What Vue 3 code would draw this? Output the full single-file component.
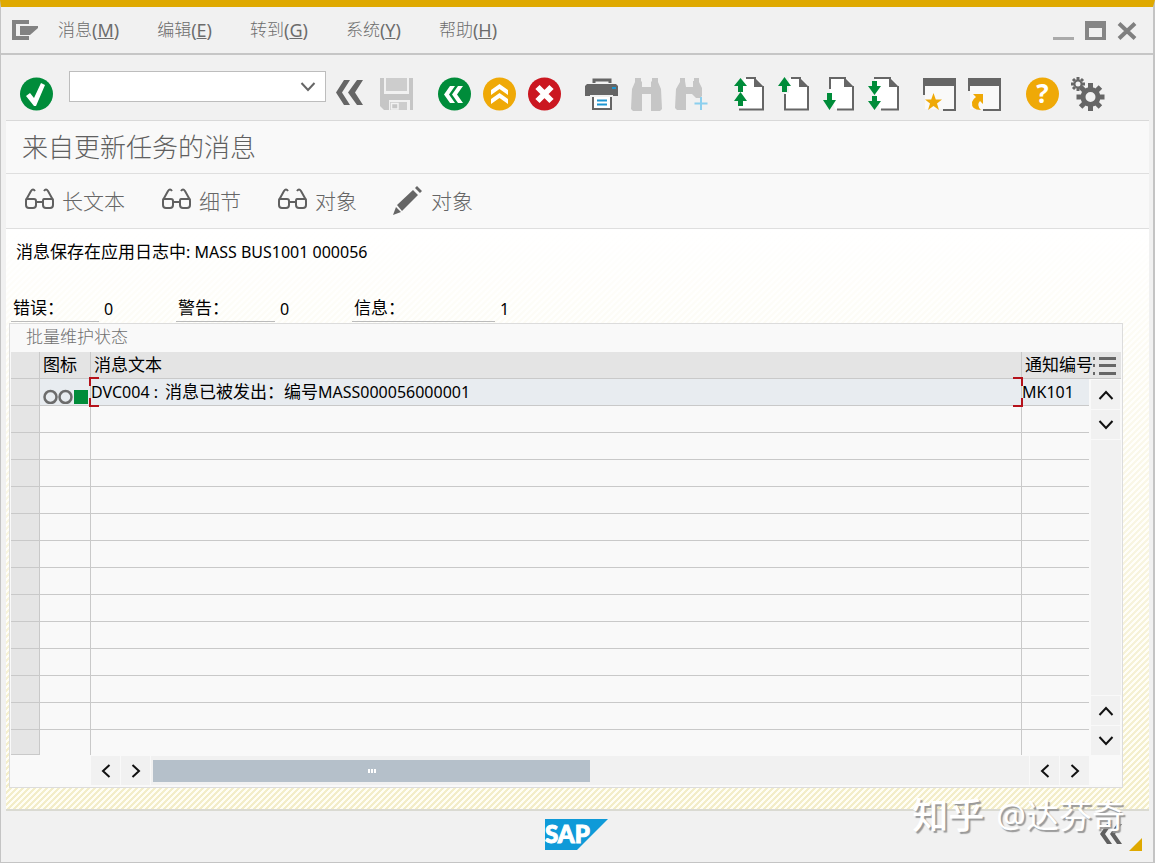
<script setup>
import { ref } from 'vue'

const command = ref('')

const menus = [
  { label: '消息', key: 'M' },
  { label: '编辑', key: 'E' },
  { label: '转到', key: 'G' },
  { label: '系统', key: 'Y' },
  { label: '帮助', key: 'H' },
]

const actions = [
  { icon: 'glasses', label: '长文本' },
  { icon: 'glasses', label: '细节' },
  { icon: 'glasses', label: '对象' },
  { icon: 'pencil', label: '对象' },
]

const counters = [
  { id: 'errors', label: '错误：', value: 0, size: 'first' },
  { id: 'warnings', label: '警告：', value: 0, size: 'second' },
  { id: 'infos', label: '信息：', value: 1, size: 'third' },
]

const emptyRows = 13
</script>

<template>
  <div class="window">
    <header class="menubar">
      <button class="plain sysmenu" aria-label="系统菜单">
        <svg width="27" height="20" viewBox="0 0 27 20">
          <path d="M17 2H2V18H17" fill="none" stroke="#828282" stroke-width="4" />
          <path d="M8 6H26V8L18 15H8Z" fill="#828282" />
        </svg>
      </button>
      <nav class="menus">
        <button v-for="m in menus" :key="m.key" class="plain menu">
          <span>{{ m.label }}</span><span class="latin">(<u>{{ m.key }}</u>)</span>
        </button>
      </nav>
      <div class="controls">
        <button class="plain" aria-label="最小化">
          <svg width="22" height="20" viewBox="0 0 22 20"><path d="M0 18.500H21" stroke="#aaa" stroke-width="3" /></svg>
        </button>
        <button class="plain" aria-label="最大化">
          <svg width="22" height="20" viewBox="0 0 22 20"><path d="M0 1H21V20H0ZM4 8V17H17V8Z" fill="#868686" fill-rule="evenodd" /></svg>
        </button>
        <button class="plain" aria-label="关闭">
          <svg width="20" height="20" viewBox="0 0 20 20"><path d="M2 3.500L18 18.500M18 3.500L2 18.500" stroke="#808080" stroke-width="4" /></svg>
        </button>
      </div>
    </header>

    <div class="toolbar">
      <button class="plain tool" aria-label="确认">
        <svg width="35" height="35" viewBox="0 0 35 35">
          <circle cx="17.500" cy="18" r="16.500" fill="#008c3a" />
          <path d="M7 20L11 17L15 22L22 7L26 9L17 30H15Z" fill="#fff" />
        </svg>
      </button>
      <div class="combo">
        <input v-model="command" type="text" aria-label="命令" />
        <button class="plain" aria-label="命令历史">
          <svg width="16" height="10" viewBox="0 0 16 10"><path d="M1.500 1L8 8L14.500 1" fill="none" stroke="#666" stroke-width="2" /></svg>
        </button>
      </div>
      <div class="group leading">
        <button class="plain tool" aria-label="收起">
          <svg width="35" height="35" viewBox="0 0 35 35">
            <path d="M16 4H10L2 16.500L10 29H16L8 16.500ZM29 4H23L14 16.500L23 29H29L21 16.500Z" fill="#666" />
          </svg>
        </button>
        <button class="plain tool" aria-label="保存" disabled>
          <svg width="35" height="35" viewBox="0 0 35 35">
            <path d="M1 2H5V18H30V2H34V34H31V24H10V34H5L1 30Z" fill="#c6c6c6" />
            <path d="M7 2H28V15H7ZM11 26H28V34H11Z" fill="#cdcdcd" />
            <path d="M12.500 27.500H19V33H12.500Z" fill="#c6c6c6" stroke="#f2f2f2" stroke-width="1.500" />
          </svg>
        </button>
      </div>
      <div class="group wide">
        <button class="plain tool" aria-label="返回">
          <svg width="35" height="35" viewBox="0 0 35 35">
            <circle cx="17.500" cy="18" r="16.500" fill="#008c3a" />
            <path d="M18 10H13L7 18.500L13 27H18L12 18.500ZM26 10H21L15 18.500L21 27H26L20 18.500Z" fill="#fff" />
          </svg>
        </button>
        <button class="plain tool" aria-label="退出">
          <svg width="35" height="35" viewBox="0 0 35 35">
            <circle cx="17.500" cy="18" r="16.500" fill="#efa907" />
            <path d="M17.500 8L26 14V19L17.500 13L9 19V14ZM17.500 17L26 23V28L17.500 22L9 28V23Z" fill="#fff" />
          </svg>
        </button>
        <button class="plain tool" aria-label="取消">
          <svg width="35" height="35" viewBox="0 0 35 35">
            <circle cx="17.500" cy="18" r="16.500" fill="#cb1720" />
            <path d="M10.500 11L24.500 25M24.500 11L10.500 25" stroke="#fff" stroke-width="6" />
          </svg>
        </button>
      </div>
      <div class="group">
        <button class="plain tool" aria-label="打印">
          <svg width="35" height="35" viewBox="0 0 35 35">
            <path d="M10 7V4H26V7" fill="none" stroke="#666" stroke-width="3" />
            <path d="M3 8H32L34 10V20H29V17H6V20H1V10Z" fill="#666" />
            <path d="M9 21V33H27V21" fill="#fff" stroke="#666" stroke-width="2" />
            <path d="M6 17H30" stroke="#666" stroke-width="4" />
            <path d="M13 24.500H23M13 28.500H23" stroke="#1c96d2" stroke-width="2" />
            <path d="M28 12H32" stroke="#1c96d2" stroke-width="2" />
          </svg>
        </button>
        <button class="plain tool" aria-label="查找" disabled>
          <svg width="35" height="35" viewBox="0 0 35 35">
            <path d="M6 2H12V5L13 6V11H22V6L23 5V2H29V6L32 13L33 33L31 35H22V18H13V35H4L2 33L3 13L6 6Z" fill="#c6c6c6" />
          </svg>
        </button>
        <button class="plain tool" aria-label="继续查找" disabled>
          <svg width="35" height="35" viewBox="0 0 35 35">
            <path d="M6 2H11V5L12 11H19V5H20V2H25V6L28 12V20L26 22H22L18 18H12V34H3L1 32L2 13L6 6Z" fill="#c6c6c6" />
            <path d="M27 21V34M20.500 27.500H33.500" stroke="#8ccfee" stroke-width="2" />
          </svg>
        </button>
      </div>
      <div class="group wide">
        <button class="plain tool" aria-label="第一页">
          <svg width="35" height="35" viewBox="0 0 35 35">
            <path d="M12 2H24L31 9V33H7V24Z" fill="#fff" />
            <path d="M14 2H24M31 10V33.500H7" fill="none" stroke="#666" stroke-width="2" />
            <path d="M22 1L32 11H22Z" fill="#666" />
            <path d="M8.500 2L15 10H11V16H6V10H2ZM8.500 16L15 25H11V30H6V25H2Z" fill="#008c3a" />
          </svg>
        </button>
        <button class="plain tool" aria-label="上一页">
          <svg width="35" height="35" viewBox="0 0 35 35">
            <path d="M12 2H24L31 9V33H8V17H12Z" fill="#fff" />
            <path d="M14 2H24M31 10V33.500H8V18" fill="none" stroke="#666" stroke-width="2" />
            <path d="M22 1L32 11H22Z" fill="#666" />
            <path d="M7.500 1L14 10H10V16H5V10H1Z" fill="#008c3a" />
          </svg>
        </button>
        <button class="plain tool" aria-label="下一页">
          <svg width="35" height="35" viewBox="0 0 35 35">
            <path d="M8 2H24L31 9V33H13L8 16Z" fill="#fff" />
            <path d="M8 13V2H24M31 10V33.500H15" fill="none" stroke="#666" stroke-width="2" />
            <path d="M22 1L32 11H22Z" fill="#666" />
            <path d="M5 17H10V24H14L7.500 34L1 24H5Z" fill="#008c3a" />
          </svg>
        </button>
        <button class="plain tool" aria-label="最后一页">
          <svg width="35" height="35" viewBox="0 0 35 35">
            <path d="M8 2H24L31 9V33H13L8 16Z" fill="#fff" />
            <path d="M7 2H24M31 10V33.500H14" fill="none" stroke="#666" stroke-width="2" />
            <path d="M22 1L32 11H22Z" fill="#666" />
            <path d="M5 5H10V10H14L7.500 19L1 10H5ZM5 20H10V25H14L7.500 34L1 25H5Z" fill="#008c3a" />
          </svg>
        </button>
      </div>
      <div class="group tight">
        <button class="plain tool" aria-label="新建会话">
          <svg width="35" height="35" viewBox="0 0 35 35">
            <path d="M3 8H32V33H3Z" fill="#f9f9f9" />
            <path d="M1 2H34V35H21V33H32V10H3V19H1Z" fill="#666" />
            <path d="M11.500 17L13.800 23.500H20L15 27.500L17 34L11.500 30L6 34L8 27.500L3 23.500H9.200Z" fill="#efa907" />
          </svg>
        </button>
        <button class="plain tool" aria-label="创建快捷方式">
          <svg width="35" height="35" viewBox="0 0 35 35">
            <path d="M3 8H32V33H3Z" fill="#f9f9f9" />
            <path d="M1 2H34V35H16V33H32V10H3V15H1Z" fill="#666" />
            <path d="M6 18H16V28L13 25Q9 29 14 34Q4 34 5 26Q6 23 9 21Z" fill="#efa907" />
          </svg>
        </button>
      </div>
      <div class="group wide">
        <button class="plain tool" aria-label="帮助">
          <svg width="35" height="35" viewBox="0 0 35 35">
            <circle cx="17.500" cy="18" r="16.500" fill="#efa907" />
            <text x="17.500" y="27" class="question">?</text>
          </svg>
        </button>
        <button class="plain tool" aria-label="自定义布局">
          <svg width="35" height="35" viewBox="0 0 35 35">
            <g fill="none" stroke="#666">
              <circle cx="20.500" cy="21" r="7.500" stroke-width="5" />
              <path d="M20.500 7V13M20.500 29V35M6.500 21H12.500M28.500 21H34.500M10.600 11.100L14.800 15.300M26.200 26.700L30.400 30.900M30.400 11.100L26.200 15.300M14.800 26.700L10.600 30.900" stroke-width="5" />
              <circle cx="8" cy="8" r="3.500" stroke-width="2" />
              <path d="M8 1V4M8 12V15M1 8H4M12 8H15M3 3L5 5M11 11L13 13M13 3L11 5M5 11L3 13" stroke-width="3" />
            </g>
          </svg>
        </button>
      </div>
    </div>

    <h1 class="title">来自更新任务的消息</h1>

    <div class="actions">
      <button v-for="(a, i) in actions" :key="i" class="plain action">
        <svg v-if="a.icon === 'glasses'" width="30" height="30" viewBox="0 0 30 30">
          <g fill="none" stroke="#606060" stroke-width="2">
            <path d="M3 13H10Q12 13 12 15V19Q12 22 9 22H5Q2 22 2 19V15Q2 13 3 13ZM20 13H28Q29 13 29 15V19Q29 22 26 22H22Q19 22 19 19V15Q19 13 20 13ZM12 16H19" />
            <path d="M2 14L7 5Q9 2 11 5M29 14L24 5Q22 2 20 5" />
          </g>
        </svg>
        <svg v-else width="30" height="30" viewBox="0 0 30 30">
          <path d="M3 21L8 26L0 29ZM4 19L20 4L25 9L9 25ZM22 2L24 0L29 5L27 7Z" fill="#666" />
        </svg>
        <span>{{ a.label }}</span>
      </button>
    </div>

    <main class="content">
      <p class="notice">消息保存在应用日志中<span class="latin">: MASS BUS1001 000056</span></p>

      <div class="counters">
        <div v-for="c in counters" :key="c.id" class="counter" :class="c.size">
          <label :for="c.id">{{ c.label }}</label>
          <output :id="c.id" class="latin">{{ c.value }}</output>
        </div>
      </div>

      <section class="panel">
        <h2>批量维护状态</h2>
        <div class="grid">
          <table>
            <colgroup>
              <col class="c-select" />
              <col class="c-icon" />
              <col />
              <col class="c-number" />
            </colgroup>
            <thead>
              <tr>
                <th></th>
                <th>图标</th>
                <th>消息文本</th>
                <th>通知编号</th>
              </tr>
            </thead>
            <tbody>
              <tr class="selected">
                <td></td>
                <td>
                  <svg class="light" width="46" height="16" viewBox="0 0 46 16">
                    <circle cx="7.500" cy="9" r="6" fill="none" stroke="#6c6c6c" stroke-width="2.500" />
                    <circle cx="22.500" cy="9" r="6" fill="none" stroke="#6c6c6c" stroke-width="2.500" />
                    <path d="M31 2H45V16H31Z" fill="#008c3a" />
                  </svg>
                </td>
                <td class="focus">
                  <span class="latin code">DVC004 :</span>消息已被发出：编号<span class="latin">MASS000056000001</span>
                  <span class="bracket open"></span>
                  <span class="bracket close"></span>
                </td>
                <td><span class="latin">MK101</span></td>
              </tr>
              <tr v-for="n in emptyRows" :key="n">
                <td></td>
                <td></td>
                <td></td>
                <td></td>
              </tr>
            </tbody>
          </table>
          <div class="side">
            <button class="plain config" aria-label="表格设置">
              <svg width="26" height="20" viewBox="0 0 26 20">
                <path d="M1 3.500H3M1 10.500H3M1 18.500H3M7 3.500H24M7 10.500H24M7 18.500H24" stroke="#666" stroke-width="3" />
              </svg>
            </button>
            <div class="vscroll">
              <button class="plain arrow" aria-label="向上">
                <svg width="16" height="10" viewBox="0 0 16 10"><path d="M1.500 9L8 2L14.500 9" /></svg>
              </button>
              <button class="plain arrow" aria-label="向下">
                <svg width="16" height="10" viewBox="0 0 16 10"><path d="M1.500 1L8 8L14.500 1" /></svg>
              </button>
              <div class="track"></div>
              <button class="plain arrow" aria-label="上一行">
                <svg width="16" height="10" viewBox="0 0 16 10"><path d="M1.500 9L8 2L14.500 9" /></svg>
              </button>
              <button class="plain arrow" aria-label="下一行">
                <svg width="16" height="10" viewBox="0 0 16 10"><path d="M1.500 1L8 8L14.500 1" /></svg>
              </button>
            </div>
          </div>
        </div>
        <div class="hscroll">
          <button class="plain arrow" aria-label="向左">
            <svg width="10" height="14" viewBox="0 0 10 14"><path d="M8.500 1L2 7L8.500 13" /></svg>
          </button>
          <button class="plain arrow" aria-label="向右">
            <svg width="10" height="14" viewBox="0 0 10 14"><path d="M1.500 1L8 7L1.500 13" /></svg>
          </button>
          <div class="track">
            <div class="thumb"><i></i><i></i><i></i></div>
          </div>
          <button class="plain arrow" aria-label="左移一列">
            <svg width="10" height="14" viewBox="0 0 10 14"><path d="M8.500 1L2 7L8.500 13" /></svg>
          </button>
          <button class="plain arrow" aria-label="右移一列">
            <svg width="10" height="14" viewBox="0 0 10 14"><path d="M1.500 1L8 7L1.500 13" /></svg>
          </button>
        </div>
      </section>
    </main>

    <footer class="status">
      <svg class="logo" width="64" height="32" viewBox="0 0 64 32" role="img" aria-label="SAP">
        <path d="M0 0H63L32 31H0Z" fill="#0f9ad8" />
        <text x="0" y="24" class="sap">SAP</text>
      </svg>
      <button class="plain expand" aria-label="展开状态栏">
        <svg width="22" height="20" viewBox="0 0 22 20">
          <path d="M12 0H7L0 10L7 20H12L5 10ZM22 0H17L10 10L17 20H22L15 10Z" fill="#606060" />
        </svg>
      </button>
      <svg class="grip" width="14" height="14" viewBox="0 0 14 14"><path d="M13 0V13H0Z" fill="#dfa900" /></svg>
      <div class="watermark"><b>知乎</b><span>@达芬奇</span></div>
    </footer>
  </div>
</template>

<style>
body {
  margin: 0;
  background: #f1f1f1;
}
</style>

<style scoped>
* {
  box-sizing: border-box;
}
.window {
  display: flex;
  flex-direction: column;
  min-height: 100vh;
  border-top: 7px solid #dfa900;
  border-left: 1px solid #c4c4c4;
  border-right: 2px solid #c4c4c4;
  border-bottom: 2px solid #c4c4c4;
  background: #f1f1f1;
  color: #000;
  font-family: "Noto Sans", "Noto Sans CJK SC", sans-serif;
  font-size: 17px;
  font-weight: 300;
  line-height: 22px;
}
.latin {
  font-size: 16px;
  font-weight: 400;
}
.plain {
  display: flex;
  align-items: center;
  justify-content: center;
  padding: 0;
  border: 0;
  background: none;
  color: inherit;
  font: inherit;
}
svg {
  display: block;
  flex: none;
}

.menubar {
  display: flex;
  align-items: center;
  height: 48px;
  padding: 0 16px 0 11px;
  border-bottom: 2px solid #c6c6c6;
  color: #6c6c6c;
}
.sysmenu {
  margin-right: 19px;
}
.menus {
  display: flex;
  flex: 1;
  gap: 38px;
}
.menu .latin {
  font-size: 18px;
}
.controls {
  display: flex;
  gap: 10px;
}

.toolbar {
  display: flex;
  align-items: flex-start;
  height: 66px;
  margin: 0 4px 0 5px;
  padding: 16px 0 0 8px;
  border-bottom: 1px solid #d9d9d9;
}
.tool {
  width: 45px;
  height: 45px;
}
.combo {
  display: flex;
  width: 257px;
  height: 31px;
  margin: 0 3px 0 10px;
  border: 1px solid #bdbdbd;
  background: #fff;
}
.combo input {
  flex: 1;
  min-width: 0;
  padding: 0 6px;
  border: 0;
  outline: 0;
  background: none;
  font: inherit;
}
.combo .plain {
  width: 34px;
}
.group {
  display: flex;
  margin-left: 12px;
}
.group.leading {
  margin-left: 0;
}
.group.wide {
  margin-left: 13px;
}
.group.tight {
  margin-left: 10px;
}
.question {
  fill: #fff;
  font: 700 26px "Open Sans", sans-serif;
  text-anchor: middle;
}

.title {
  display: flex;
  align-items: center;
  height: 53px;
  margin: 0 4px 0 5px;
  padding: 0 16px;
  border-bottom: 1px solid #dfdfdf;
  background: #f9f9f9;
  color: #606060;
  font-size: 26px;
  font-weight: 300;
}
.actions {
  display: flex;
  gap: 36px;
  height: 55px;
  margin: 0 4px 0 5px;
  padding: 0 18px;
  border-bottom: 1px solid #dfdfdf;
  background: #f9f9f9;
  color: #666;
  font-size: 21px;
}
.action {
  gap: 8px;
}

.content {
  flex: 1;
  margin: 0 4px 0 5px;
  padding: 12px 26px 21px 3px;
  border-bottom: 2px solid #dadad2;
  background:
    linear-gradient(to bottom, #fff, rgba(255, 255, 255, 0)),
    linear-gradient(135deg, #f3edc8 12%, #fffef4 12%, #fffef4 38%, #f3edc8 38%, #f3edc8 62%, #fffef4 62%, #fffef4 88%, #f3edc8 88%) 0 0 / 6px 6px;
  font-weight: 400;
}
.notice {
  margin: 0 0 33px 7px;
}
.counters {
  display: flex;
  margin-left: 2px;
}
.counter {
  display: flex;
  gap: 5px;
}
.counter label {
  height: 26px;
  padding: 1px 2px 0;
  border-bottom: 1px solid #bbb;
}
.counter output {
  padding-top: 2px;
}
.first label {
  width: 88px;
}
.second label {
  width: 99px;
}
.third label {
  width: 143px;
}
.first {
  width: 165px;
}
.second {
  width: 176px;
}

.panel {
  margin-top: 1px;
  padding: 1px;
  border: 1px solid #dcdcdc;
  background: #f9f9f9;
}
.panel h2 {
  height: 27px;
  margin: 0;
  padding: 1px 15px;
  color: #707070;
  font-size: 17px;
  font-weight: 300;
}
.grid {
  display: flex;
}
table {
  position: relative;
  z-index: 1;
  flex: 1;
  width: 0;
  border-spacing: 0;
  table-layout: fixed;
}
.c-select {
  width: 29px;
}
.c-icon {
  width: 51px;
}
.c-number {
  width: 67px;
}
th,
td {
  height: 27px;
  padding: 0;
  border-right: 1px solid #c9c9c9;
  border-bottom: 1px solid #c9c9c9;
  font-weight: 400;
  text-align: left;
  white-space: nowrap;
}
th {
  padding-left: 3px;
  background: #e4e4e4;
}
th:last-child,
td:last-child {
  border-right: 0;
}
td:first-child {
  background: #e5e5e5;
}
tbody tr:last-child td {
  height: 25px;
}
tbody tr:last-child td:not(:first-child) {
  border-bottom: 0;
}
.selected td:not(:first-child) {
  background: #e8ecf0;
}
.light {
  margin: 8px 0 0 3px;
}
.code {
  margin-right: 7px;
}
.focus {
  position: relative;
}
.bracket {
  position: absolute;
  top: -2px;
  width: 10px;
  height: 30px;
  border: 2px solid #b5121b;
  clip-path: polygon(0 0, 100% 0, 100% 9px, 0 9px, 0 21px, 100% 21px, 100% 100%, 0 100%);
}
.open {
  left: -2px;
  border-right: 0;
}
.close {
  right: -2px;
  border-left: 0;
  clip-path: polygon(0 0, 100% 0, 100% 9px, 0 9px, 0 21px, 100% 21px, 100% 100%, 0 100%, 0 21px, 0 9px);
}
.side {
  display: flex;
  flex-direction: column;
  width: 32px;
}
.config {
  height: 27px;
  border-bottom: 1px solid #c9c9c9;
  background: #e4e4e4;
}
.vscroll {
  display: flex;
  flex: 1;
  flex-direction: column;
  gap: 1px;
  margin-left: 2px;
  padding-top: 1px;
}
.track {
  flex: 1;
  background: #f1f1f1;
}
.arrow {
  width: 29px;
  height: 29px;
  background: #f1f1f1;
}
.arrow path {
  fill: none;
  stroke: #111;
  stroke-width: 2;
}
.hscroll {
  display: flex;
  gap: 1px;
  margin: 1px 32px 1px 80px;
}
.hscroll .track {
  padding: 4px 2px 3px;
}
.thumb {
  display: flex;
  align-items: center;
  justify-content: center;
  gap: 1px;
  width: 50%;
  height: 22px;
  background: #b5c0ca;
}
.thumb i {
  width: 2px;
  height: 4px;
  background: #fff;
}

.status {
  position: relative;
  height: 51px;
}
.logo {
  margin: 8px auto 0 544px;
}
.sap {
  fill: #fff;
  stroke: #fff;
  stroke-width: 1px;
  font: 900 24px Lato, sans-serif;
}
.expand {
  position: absolute;
  right: 31px;
  bottom: 18px;
}
.grip {
  position: absolute;
  right: 10px;
  bottom: 10px;
}
.watermark {
  position: absolute;
  right: 28px;
  bottom: 25px;
  display: flex;
  gap: 12px;
  color: #fff;
  font-size: 33px;
  font-weight: 400;
  line-height: 42px;
  text-shadow: 2px 2px 1px #999;
  pointer-events: none;
}
.watermark b {
  font-size: 36px;
  font-weight: 500;
}
</style>
